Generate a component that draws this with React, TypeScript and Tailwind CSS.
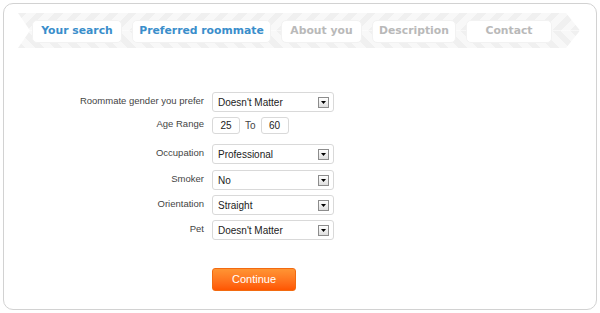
const tabs = [
  { label: "Your search", w: "w-[90px]", active: true },
  { label: "Preferred roommate", w: "w-[139px]", active: true },
  { label: "About you", w: "w-[81px]", active: false },
  { label: "Description", w: "w-[84px]", active: false },
  { label: "Contact", w: "w-[86px]", active: false },
];

function Select({ value }: { value: string }) {
  return (
    <div className="flex h-[20px] w-[122px] items-center justify-between rounded-[3px] border border-[#d9d9d9] bg-white pl-[5px] pr-[4px] text-[10px] text-[#222]">
      <span>{value}</span>
      <span className="flex h-[11px] w-[11px] items-center justify-center border border-[#8c8c8c] bg-gradient-to-b from-white to-[#dedede]">
        <svg width="5" height="3" viewBox="0 0 5 3">
          <path d="M0 0h5L2.5 3z" fill="#000" />
        </svg>
      </span>
    </div>
  );
}

function Row({ label, children, className }: { label: string; children: React.ReactNode; className: string }) {
  return (
    <div className={`grid grid-cols-[200px_auto] items-center gap-x-[8px] ${className}`}>
      <span className="mb-[2px] text-right text-[9.5px] text-[#444]">{label}</span>
      <div className="flex items-center">{children}</div>
    </div>
  );
}

export default function App() {
  return (
    <div className="h-[313px] w-[600px] bg-white p-[3px] font-['Liberation_Sans',Arial,sans-serif]">
      <div className="h-[307px] w-[594px] rounded-[10px] border border-[#d2d2d2] bg-white">
        {/* step strip */}
        <div className="ml-[14px] mt-[9px] flex h-[35px] w-[562px] items-start gap-[10px] pl-[14px] pt-[7px] [background:repeating-linear-gradient(135deg,#f0f0f0_0_6px,#f8f8f8_6px_13px)_top/100%_50%_no-repeat,repeating-linear-gradient(45deg,#f0f0f0_0_6px,#f8f8f8_6px_13px)_bottom/100%_50%_no-repeat] [clip-path:polygon(0_0,calc(100%-14px)_0,100%_50%,calc(100%-14px)_100%,0_100%,12px_50%)]">
          {tabs.map((t) => (
            <div
              key={t.label}
              className={`flex h-[23px] ${t.w} items-center justify-center rounded-[5px] border border-[#f2f2f2] bg-white font-['DejaVu_Sans',Verdana,sans-serif] text-[10.8px] font-bold ${
                t.active ? "text-[#3a8ecb]" : "text-[#b9b9b9]"
              }`}
            >
              {t.label}
            </div>
          ))}
        </div>

        {/* form */}
        <Row label="Roommate gender you prefer" className="mt-[44px]">
          <Select value="Doesn't Matter" />
        </Row>
        <Row label="Age Range" className="mt-[5px]">
          <div className="flex items-center gap-[5px] text-[10px] text-[#222]">
            <span className="flex h-[17px] w-[28px] items-center justify-center rounded-[3px] border border-[#d9d9d9]">25</span>
            <span className="text-[#444]">To</span>
            <span className="flex h-[17px] w-[28px] items-center justify-center rounded-[3px] border border-[#d9d9d9]">60</span>
          </div>
        </Row>
        <Row label="Occupation" className="mt-[10px]">
          <Select value="Professional" />
        </Row>
        <Row label="Smoker" className="mt-[6px]">
          <Select value="No" />
        </Row>
        <Row label="Orientation" className="mt-[5px]">
          <Select value="Straight" />
        </Row>
        <Row label="Pet" className="mt-[5px]">
          <Select value="Doesn't Matter" />
        </Row>

        <div className="ml-[208px] mt-[26px]">
          <button className="h-[23px] w-[84px] rounded-[3px] border border-[#f26a10] bg-gradient-to-b from-[#ff9433] to-[#ff5500] text-[11px] text-white">
            Continue
          </button>
        </div>
      </div>
    </div>
  );
}
